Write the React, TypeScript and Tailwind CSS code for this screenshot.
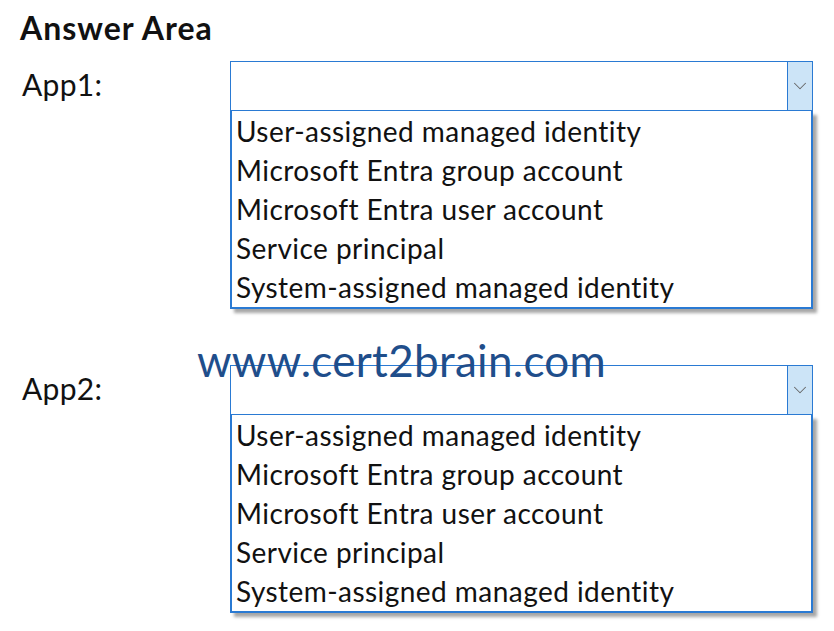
import { ChevronDown } from 'lucide-react';

const options = [
    'User-assigned managed identity',
    'Microsoft Entra group account',
    'Microsoft Entra user account',
    'Service principal',
    'System-assigned managed identity',
];

const DropdownRow = ({ label }: { label: string }) => (
    <div className="flex">
        <div className="w-[230px] pl-[22px] pt-[5px] text-[30px] leading-[36px] tracking-[0.3px] text-[#111]">{label}</div>
        <div className="w-[583px]">
            <div className="flex h-[50px] border border-[#2a7ad3] bg-white">
                <div className="flex-1" />
                <div className="flex w-[25px] items-center justify-center border-l border-[#2a7ad3] bg-[#cce4f7]">
                    <ChevronDown size={22} strokeWidth={1.1} className="text-[#666]" />
                </div>
            </div>
            <div className="h-[198px] border-x-2 border-b-2 border-[#2a7ad3] bg-white pl-[4px] pt-[1px] shadow-[4px_4px_3px_rgba(0,0,0,0.35)]">
                {options.map((opt) => (
                    <div key={opt} className="h-[39px] text-[28px] leading-[39px] tracking-[0.45px] text-[#111] whitespace-nowrap">
                        {opt}
                    </div>
                ))}
            </div>
        </div>
    </div>
);

export default function App() {
    return (
        <div className="relative h-[631px] w-[834px] overflow-hidden bg-white font-['Lato','Open_Sans',sans-serif]">
            <div className="pl-[20px] pt-[9px] text-[32px] font-bold leading-[38px] tracking-[1px] text-[#111]">Answer Area</div>
            <div className="mt-[14px]">
                <DropdownRow label="App1:" />
            </div>
            <div className="mt-[56px]">
                <DropdownRow label="App2:" />
            </div>
            <div className="absolute left-[197px] top-[334px] text-[44px] leading-[52px] tracking-[0.3px] text-[#1f4e8b]">
                www.cert2brain.com
            </div>
        </div>
    );
}
